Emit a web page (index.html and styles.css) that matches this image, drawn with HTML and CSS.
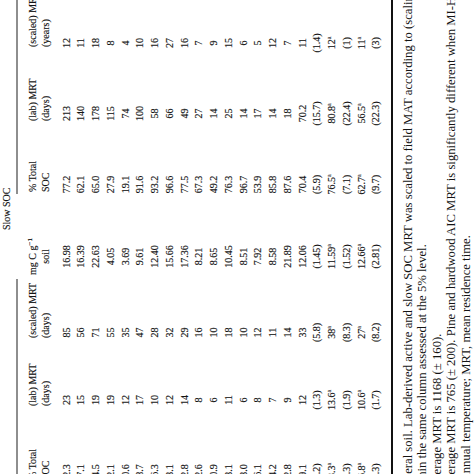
FILE: index.html
```html
<!DOCTYPE html>
<html>
<head>
<meta charset="utf-8">
<link rel="stylesheet" href="styles.css">
</head>
<body>
<div class="page">
  <div class="sheet">
    <div class="grid grouprow">
      <div class="slow">Slow SOC</div>
    </div>
    <div class="rules">
      <div class="rule r1"></div>
      <div class="rule r2"></div>
    </div>
    <div class="grid head">
      <div class="hc first">% Total<br>SOC</div>
      <div class="hc">(lab) MRT<br>(days)</div>
      <div class="hc">(scaled) MRT<br>(days)</div>
      <div class="hc center">mg C g<sup class="exp">−1</sup><br>soil</div>
      <div class="hc">% Total<br>SOC</div>
      <div class="hc">(lab) MRT<br>(days)</div>
      <div class="hc last">(scaled) MRT<br>(years)</div>
    </div>
    <div class="tbody">
      <div class="grid row"><span>22.3</span><span>23</span><span>85</span><span>16.98</span><span>77.2</span><span>213</span><span>12</span></div>
      <div class="grid row"><span>37.1</span><span>15</span><span>56</span><span>16.39</span><span>62.1</span><span>140</span><span>11</span></div>
      <div class="grid row"><span>34.5</span><span>19</span><span>71</span><span>22.63</span><span>65.0</span><span>178</span><span>18</span></div>
      <div class="grid row"><span>72.1</span><span>19</span><span>55</span><span>4.05</span><span>27.9</span><span>115</span><span>8</span></div>
      <div class="grid row"><span>80.6</span><span>12</span><span>35</span><span>3.69</span><span>19.1</span><span>74</span><span>4</span></div>
      <div class="grid row"><span>18.7</span><span>17</span><span>47</span><span>9.61</span><span>91.6</span><span>100</span><span>10</span></div>
      <div class="grid row"><span>16.3</span><span>10</span><span>28</span><span>12.40</span><span>93.2</span><span>58</span><span>16</span></div>
      <div class="grid row"><span>13.1</span><span>12</span><span>32</span><span>15.66</span><span>96.6</span><span>66</span><span>27</span></div>
      <div class="grid row"><span>22.8</span><span>14</span><span>29</span><span>17.36</span><span>77.5</span><span>49</span><span>16</span></div>
      <div class="grid row"><span>32.6</span><span>8</span><span>16</span><span>8.21</span><span>67.3</span><span>27</span><span>7</span></div>
      <div class="grid row"><span>50.9</span><span>6</span><span>10</span><span>8.65</span><span>49.2</span><span>14</span><span>9</span></div>
      <div class="grid row"><span>23.1</span><span>11</span><span>18</span><span>10.45</span><span>76.3</span><span>25</span><span>15</span></div>
      <div class="grid row"><span>13.0</span><span>6</span><span>10</span><span>8.51</span><span>96.7</span><span>14</span><span>6</span></div>
      <div class="grid row"><span>46.1</span><span>8</span><span>12</span><span>7.92</span><span>53.9</span><span>17</span><span>5</span></div>
      <div class="grid row"><span>14.2</span><span>7</span><span>11</span><span>8.58</span><span>85.8</span><span>14</span><span>12</span></div>
      <div class="grid row"><span>12.8</span><span>9</span><span>14</span><span>21.89</span><span>87.6</span><span>18</span><span>7</span></div>
      <div class="grid row"><span>29.1</span><span>12</span><span>33</span><span>12.06</span><span>70.4</span><span>70.2</span><span>11</span></div>
      <div class="grid row"><span>(5.2)</span><span>(1.3)</span><span>(5.8)</span><span>(1.45)</span><span>(5.9)</span><span>(15.7)</span><span>(1.4)</span></div>
      <div class="grid row"><span>23.3<sup>a</sup></span><span>13.6<sup>a</sup></span><span>38<sup>a</sup></span><span>11.59<sup>a</sup></span><span>76.5<sup>a</sup></span><span>80.8<sup>a</sup></span><span>12<sup>a</sup></span></div>
      <div class="grid row"><span>(7.3)</span><span>(1.9)</span><span>(8.3)</span><span>(1.52)</span><span>(7.1)</span><span>(22.4)</span><span>(1)</span></div>
      <div class="grid row"><span>36.8<sup>a</sup></span><span>10.6<sup>a</sup></span><span>27<sup>a</sup></span><span>12.66<sup>a</sup></span><span>62.7<sup>a</sup></span><span>56.5<sup>a</sup></span><span>11<sup>a</sup></span></div>
      <div class="grid row"><span>(9.3)</span><span>(1.7)</span><span>(8.2)</span><span>(2.81)</span><span>(9.7)</span><span>(22.3)</span><span>(3)</span></div>
    </div>
  </div>
  <div class="bottomrule"></div>
  <div class="notes">
    <p class="note n1">Mineral soil. Lab-derived active and slow SOC MRT was scaled to field MAT according to (scaling factor).</p>
    <p class="note n2">within the same column assessed at the 5% level.</p>
    <p class="note n3">Average MRT is 1168 (± 160).</p>
    <p class="note n4">Average MRT is 765 (± 200). Pine and hardwood AIC MRT is significantly different when MI-H2 is included.</p>
    <p class="note n5">annual temperature; MRT, mean residence time.</p>
  </div>
</div>
</body>
</html>
```

FILE: styles.css
```css
html, body {
  margin: 0;
  padding: 0;
  background: #ffffff;
  overflow: hidden;
}

body {
  width: 474px;
  height: 474px;
}

.page {
  width: 474px;
  height: 474px;
  overflow: hidden;
  transform: rotate(-90deg);
  transform-origin: 50% 50%;
  background: #ffffff;
  color: #141414;
  font-family: "Liberation Serif", "Times New Roman", serif;
  display: flex;
  flex-direction: column;
}

.sheet {
  margin-left: -38px;
  width: 578px;
  display: flex;
  flex-direction: column;
  font-size: 10px;
  -webkit-text-stroke: 0.15px #141414;
}

.grid {
  display: grid;
  grid-template-columns: 78px 68px 73px 73px 71px 71px 70px 74px;
}

.grouprow {
  height: 14px;
  line-height: 14px;
}

.slow {
  grid-column: 4 / 8;
  padding-left: 63px;
  white-space: nowrap;
}

.rules {
  display: flex;
  gap: 85px;
  margin-top: 2px;
}

.rule {
  height: 2px;
  background: #8e8e8e;
}

.r1 {
  width: 233px;
}

.r2 {
  flex: 1;
}

.head {
  margin-top: 7.5px;
  line-height: 13px;
}

.hc {
  padding-left: 28px;
  white-space: nowrap;
}

.hc.first {
  padding-left: 32px;
}

.hc.last {
  padding-left: 31px;
}

.hc.center {
  padding-left: 0;
  text-align: center;
}

.exp {
  font-size: 7px;
  line-height: 0;
  vertical-align: 4px;
}

.tbody {
  margin-top: 8px;
  display: flex;
  flex-direction: column;
}

.row {
  height: 14.75px;
  line-height: 14.75px;
}

.row span {
  text-align: center;
  white-space: nowrap;
}

.row span:nth-child(3) {
  padding-right: 6px;
}

.row sup {
  font-size: 6px;
  line-height: 0;
  vertical-align: 4px;
}

.bottomrule {
  margin-top: 7px;
  height: 2px;
  background: #111111;
}

.notes {
  margin-top: 8px;
  font-size: 12.7px;
  line-height: 14.4px;
}

.note {
  margin: 0;
  white-space: nowrap;
}

.n1 {
  margin-left: -21px;
}

.n2 {
  margin-left: -20px;
}

.n3,
.n4 {
  margin-left: -15px;
}

.n5 {
  margin-left: -5px;
}
```
